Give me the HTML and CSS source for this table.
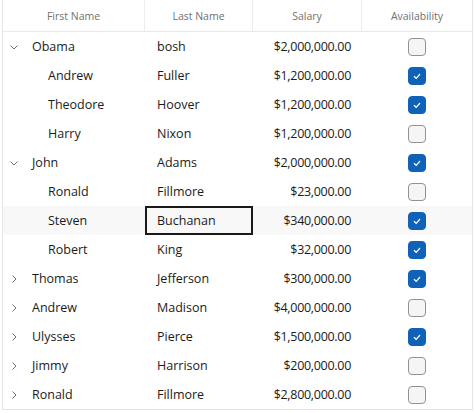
FILE: index.html
```html
<!DOCTYPE html>
<html>
<head>
<meta charset="utf-8">
<link rel="stylesheet" href="styles.css">
</head>
<body>
<div class="grid">
  <div class="row header">
    <div class="hcell">First Name</div>
    <div class="hcell">Last Name</div>
    <div class="hcell">Salary</div>
    <div class="hcell last">Availability</div>
  </div>

  <div class="row">
    <div class="cell first"><svg class="chev" viewBox="0 0 10 10"><path d="M1.5 3.5 L5 7 L8.5 3.5"/></svg><span>Obama</span></div>
    <div class="cell">bosh</div>
    <div class="cell num">$2,000,000.00</div>
    <div class="cell check"><span class="box"></span></div>
  </div>
  <div class="row">
    <div class="cell first child"><span>Andrew</span></div>
    <div class="cell">Fuller</div>
    <div class="cell num">$1,200,000.00</div>
    <div class="cell check"><span class="box on"><svg viewBox="0 0 12 12"><path d="M3 6.2 L5.2 8.3 L9 4"/></svg></span></div>
  </div>
  <div class="row">
    <div class="cell first child"><span>Theodore</span></div>
    <div class="cell">Hoover</div>
    <div class="cell num">$1,200,000.00</div>
    <div class="cell check"><span class="box on"><svg viewBox="0 0 12 12"><path d="M3 6.2 L5.2 8.3 L9 4"/></svg></span></div>
  </div>
  <div class="row">
    <div class="cell first child"><span>Harry</span></div>
    <div class="cell">Nixon</div>
    <div class="cell num">$1,200,000.00</div>
    <div class="cell check"><span class="box"></span></div>
  </div>
  <div class="row">
    <div class="cell first"><svg class="chev" viewBox="0 0 10 10"><path d="M1.5 3.5 L5 7 L8.5 3.5"/></svg><span>John</span></div>
    <div class="cell">Adams</div>
    <div class="cell num">$2,000,000.00</div>
    <div class="cell check"><span class="box on"><svg viewBox="0 0 12 12"><path d="M3 6.2 L5.2 8.3 L9 4"/></svg></span></div>
  </div>
  <div class="row">
    <div class="cell first child"><span>Ronald</span></div>
    <div class="cell">Fillmore</div>
    <div class="cell num">$23,000.00</div>
    <div class="cell check"><span class="box"></span></div>
  </div>
  <div class="row selected">
    <div class="cell first child"><span>Steven</span></div>
    <div class="cell focus">Buchanan</div>
    <div class="cell num">$340,000.00</div>
    <div class="cell check"><span class="box on"><svg viewBox="0 0 12 12"><path d="M3 6.2 L5.2 8.3 L9 4"/></svg></span></div>
  </div>
  <div class="row">
    <div class="cell first child"><span>Robert</span></div>
    <div class="cell">King</div>
    <div class="cell num">$32,000.00</div>
    <div class="cell check"><span class="box on"><svg viewBox="0 0 12 12"><path d="M3 6.2 L5.2 8.3 L9 4"/></svg></span></div>
  </div>
  <div class="row">
    <div class="cell first"><svg class="chev" viewBox="0 0 10 10"><path d="M3.5 1.5 L7 5 L3.5 8.5"/></svg><span>Thomas</span></div>
    <div class="cell">Jefferson</div>
    <div class="cell num">$300,000.00</div>
    <div class="cell check"><span class="box on"><svg viewBox="0 0 12 12"><path d="M3 6.2 L5.2 8.3 L9 4"/></svg></span></div>
  </div>
  <div class="row">
    <div class="cell first"><svg class="chev" viewBox="0 0 10 10"><path d="M3.5 1.5 L7 5 L3.5 8.5"/></svg><span>Andrew</span></div>
    <div class="cell">Madison</div>
    <div class="cell num">$4,000,000.00</div>
    <div class="cell check"><span class="box"></span></div>
  </div>
  <div class="row">
    <div class="cell first"><svg class="chev" viewBox="0 0 10 10"><path d="M3.5 1.5 L7 5 L3.5 8.5"/></svg><span>Ulysses</span></div>
    <div class="cell">Pierce</div>
    <div class="cell num">$1,500,000.00</div>
    <div class="cell check"><span class="box on"><svg viewBox="0 0 12 12"><path d="M3 6.2 L5.2 8.3 L9 4"/></svg></span></div>
  </div>
  <div class="row">
    <div class="cell first"><svg class="chev" viewBox="0 0 10 10"><path d="M3.5 1.5 L7 5 L3.5 8.5"/></svg><span>Jimmy</span></div>
    <div class="cell">Harrison</div>
    <div class="cell num">$200,000.00</div>
    <div class="cell check"><span class="box"></span></div>
  </div>
  <div class="row">
    <div class="cell first"><svg class="chev" viewBox="0 0 10 10"><path d="M3.5 1.5 L7 5 L3.5 8.5"/></svg><span>Ronald</span></div>
    <div class="cell">Fillmore</div>
    <div class="cell num">$2,800,000.00</div>
    <div class="cell check"><span class="box"></span></div>
  </div>
</div>
</body>
</html>
```
FILE: styles.css
```css
html, body {
  margin: 0;
  padding: 0;
  background: #ffffff;
}
body {
  font-family: "Open Sans", "Noto Sans", sans-serif;
  font-size: 12.5px;
  color: #1b1b1b;
}
.grid {
  margin-left: 2px;
  width: 469px;
  border: 1px solid #e6e6e6;
  border-top: none;
}
.row {
  display: grid;
  grid-template-columns: 142px 108px 109px 110px;
  height: 29px;
  align-items: stretch;
}
.row.header {
  height: 31px;
  border-bottom: 1px solid #e8e8e8;
}
.hcell {
  display: flex;
  align-items: center;
  justify-content: center;
  font-size: 10.5px;
  color: #707070;
  border-right: 1px solid #ececec;
}
.hcell.last {
  border-right: none;
}
.cell {
  display: flex;
  align-items: center;
  padding: 0 12px;
  box-sizing: border-box;
  white-space: nowrap;
}
.cell.first {
  padding-left: 6px;
}
.cell.first.child {
  padding-left: 45px;
}
.chev {
  width: 10px;
  height: 10px;
  margin-right: 13px;
  fill: none;
  stroke: #6e6e6e;
  stroke-width: 1;
}
.cell.num {
  justify-content: flex-end;
  padding-right: 11px;
  letter-spacing: -0.3px;
}
.cell.check {
  justify-content: center;
}
.row.selected {
  background: #f8f8f8;
}
.cell.focus {
  border: 2px solid #1a1a1a;
  padding-left: 10px;
}
.box {
  width: 18px;
  height: 18px;
  box-sizing: border-box;
  border: 1px solid #929292;
  border-radius: 4px;
  background: #f5f5f5;
  display: flex;
  align-items: center;
  justify-content: center;
}
.box.on {
  background: #0f62b8;
  border-color: #0f62b8;
}
.box svg {
  width: 12px;
  height: 12px;
  fill: none;
  stroke: #ffffff;
  stroke-width: 1.2;
}
```
